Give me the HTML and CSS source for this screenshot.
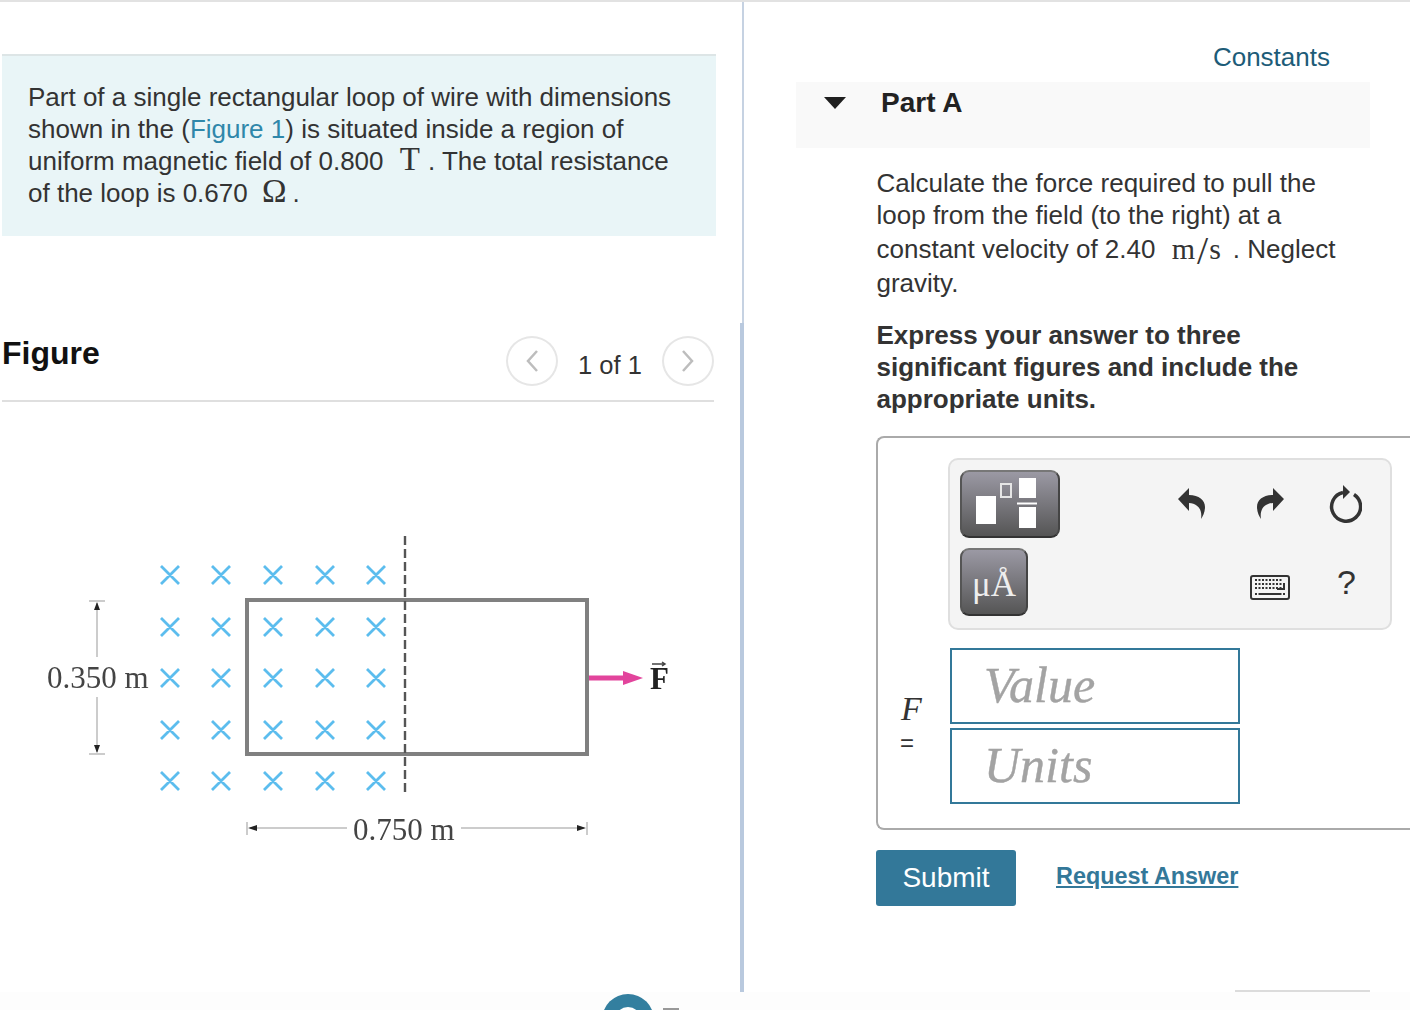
FILE: index.html
```html
<!DOCTYPE html>
<html lang="en">
<head>
<meta charset="utf-8">
<title>Part A</title>
<link rel="stylesheet" href="styles.css">
</head>
<body>
<div class="page">
  <div class="columns">
    <section class="left">
      <div class="intro">
        <p>Part of a single rectangular loop of wire with dimensions<br>shown in the (<a class="fig-link" href="#">Figure 1</a>) is situated inside a region of<br>uniform magnetic field of 0.800 <span class="math math-t">T</span>. The total resistance<br>of the loop is 0.670 <span class="math math-t math-omega">Ω</span>.</p>
      </div>
      <div class="fig-head">
        <h2>Figure</h2>
        <div class="pager">
          <span class="pager-btn"><svg width="14" height="24" viewBox="0 0 14 24"><path d="M12 2 3 12l9 10" class="chev"/></svg></span>
          <span class="pager-text">1 of 1</span>
          <span class="pager-btn"><svg width="14" height="24" viewBox="0 0 14 24"><path d="M2 2l9 10-9 10" class="chev"/></svg></span>
        </div>
      </div>
      <svg class="diagram" width="740" height="590" viewBox="0 402 740 590">
        <g class="xs">
          <path d="M161 566l18 18M179 566l-18 18M212 566l18 18M230 566l-18 18M264 566l18 18M282 566l-18 18M316 566l18 18M334 566l-18 18M367 566l18 18M385 566l-18 18"/>
          <path d="M161 618l18 18M179 618l-18 18M212 618l18 18M230 618l-18 18M264 618l18 18M282 618l-18 18M316 618l18 18M334 618l-18 18M367 618l18 18M385 618l-18 18"/>
          <path d="M161 669l18 18M179 669l-18 18M212 669l18 18M230 669l-18 18M264 669l18 18M282 669l-18 18M316 669l18 18M334 669l-18 18M367 669l18 18M385 669l-18 18"/>
          <path d="M161 721l18 18M179 721l-18 18M212 721l18 18M230 721l-18 18M264 721l18 18M282 721l-18 18M316 721l18 18M334 721l-18 18M367 721l18 18M385 721l-18 18"/>
          <path d="M161 772l18 18M179 772l-18 18M212 772l18 18M230 772l-18 18M264 772l18 18M282 772l-18 18M316 772l18 18M334 772l-18 18M367 772l18 18M385 772l-18 18"/>
        </g>
        <rect class="loop" x="247" y="600" width="340" height="154"/>
        <path class="dash" d="M405 536V795"/>
        <path class="arrow-shaft" d="M589 678H628"/>
        <path class="arrow-head" d="M623 671l20 7-20 7z"/>
        <path class="dim" d="M97 603V657M97 697V752M89 601h16M89 754h16M247 822v13M587 822v13M250 828H347M461 828H584"/>
        <path class="dim-head" d="M97 602l-3 8h6zM97 753l-3-8h6zM248 828l9-3v6zM586 828l-9-3v6z"/>
        <text class="dim-label" x="47" y="688">0.350 m</text>
        <text class="dim-label" x="353" y="840">0.750 m</text>
        <text class="force" x="650" y="689">F</text>
        <path class="force-bar" d="M652 664H665M662 662l3 2-3 2"/>
      </svg>
    </section>
    <div class="divider"><span class="div-top"></span><span class="div-bottom"></span></div>
    <section class="right">
      <a class="constants" href="#">Constants</a>
      <div class="part-bar">
        <svg class="caret" width="22" height="12" viewBox="0 0 22 12"><path d="M0 0H22L11 12z"/></svg>
        <h3>Part A</h3>
      </div>
      <p class="question">Calculate the force required to pull the<br>loop from the field (to the right) at a<br>constant velocity of 2.40 <span class="math math-ms">m<span class="slash">/</span>s</span>. Neglect<br>gravity.</p>
      <p class="instruction">Express your answer to three<br>significant figures and include the<br>appropriate units.</p>
      <div class="answer">
        <div class="toolbar">
          <div class="tool-row">
            <div class="tpl-btn tpl-wide">
              <svg width="96" height="64" viewBox="0 0 96 64">
                <path class="tw" d="M14 24h20v28H14zM57 6h17v20H57zM57 35h17v21H57z"/>
                <path class="tw" d="M55 30.500h20v2H55z"/>
                <rect class="tout" x="39" y="12" width="10" height="13"/>
              </svg>
            </div>
            <div class="tool-icons">
              <span class="cell"><svg width="29" height="32" viewBox="0 0 29 32"><path class="ic" d="M1 11 12 0v7c10 0 16 5 16 12 0 5-2 9-4 12 1-6 0-15-12-16v8z"/></svg></span>
              <span class="cell"><svg class="nudge-r" width="29" height="32" viewBox="0 0 29 32"><path class="ic" d="M28 11 17 0v7C7 7 1 12 1 19c0 5 2 9 4 12-1-6 0-15 12-16v8z"/></svg></span>
              <span class="cell"><svg class="nudge-l" width="34" height="38" viewBox="0 0 34 38"><path class="ring" d="M26 9.500A14.500 14.500 0 1 1 15 7.500"/><path class="ic" d="M15 0l7 7-7 7z"/></svg></span>
            </div>
          </div>
          <div class="tool-row">
            <div class="tpl-btn tpl-narrow"><span class="units-glyph">μÅ</span></div>
            <div class="tool-icons">
              <span class="cell cell-kb"><svg class="nudge-r" width="40" height="25" viewBox="0 0 40 25">
                <rect class="kb" x="1" y="1" width="38" height="23" rx="2"/>
                <path class="kb-keys" d="M5 5h28M5 9h30M5 13h30M5 19h30" />
                <path class="kb-solid" d="M33 8h2v7H27v-2h6zM10 18h21v2H10z"/>
              </svg></span>
              <span class="cell"><span class="help">?</span></span>
            </div>
          </div>
        </div>
        <div class="eq-row">
          <div class="eq-label"><span class="eq-f">F</span><span class="eq-sign">=</span></div>
          <div class="eq-fields">
            <div class="field">Value</div>
            <div class="field">Units</div>
          </div>
        </div>
      </div>
      <div class="actions">
        <button class="submit" type="button">Submit</button>
        <a class="request" href="#">Request Answer</a>
      </div>
      <div class="end-rule"></div>
    </section>
  </div>
  <footer class="footer">
    <svg class="logo" width="52" height="16" viewBox="0 0 52 16"><circle class="logo-o" cx="26" cy="26" r="26"/><circle class="logo-i" cx="26" cy="26" r="13"/></svg>
    <span class="foot-mark"></span>
  </footer>
</div>
</body>
</html>
```
FILE: styles.css
```css
* { box-sizing: border-box; }
html, body { margin: 0; padding: 0; }
body {
  background: #fff;
  color: #333;
  font-family: "Liberation Sans", Arial, sans-serif;
  font-size: 26px;
  line-height: 32px;
  overflow: hidden;
}
p, h2, h3 { margin: 0; }
a { text-decoration: none; }
.page { width: 1410px; height: 1010px; display: flex; flex-direction: column; border-top: 2px solid #e2e2e2; overflow: hidden; }
.columns { display: flex; height: 990px; }

.left { width: 740px; flex: none; padding-top: 52px; }
.intro { margin-left: 2px; width: 714px; height: 182px; background: #e9f5f7; border-top: 2px solid #dde5e6; padding: 25px 26px 0; white-space: nowrap; }
.fig-link { color: #2f87aa; }
.math { font-family: "Liberation Serif", "DejaVu Serif", serif; }
.math-t { font-size: 33px; line-height: 20px; margin: 0 8px 0 9px; }
.math-omega { margin: 0 6px 0 7px; }
.math-ms { font-size: 30px; line-height: 36px; margin: 0 10px 0 9px; letter-spacing: 2px; vertical-align: -1px; }
.slash { font-size: 40px; line-height: 0; vertical-align: -5px; letter-spacing: 1px; }

.fig-head { margin: 100px 0 0 2px; width: 712px; height: 66px; border-bottom: 2px solid #dfdfdf; display: flex; justify-content: space-between; position: relative; }
.fig-head h2 { font-size: 32px; line-height: 34px; color: #111; font-weight: 700; }
.pager { display: flex; align-items: flex-start; height: 50px; margin-right: 0; }
.pager-btn { width: 52px; height: 50px; border: 2px solid #e6e6e6; border-radius: 50%; display: flex; align-items: center; justify-content: center; }
.pager-text { width: 104px; text-align: center; padding-top: 13px; white-space: nowrap; font-size: 25.500px; }
.chev { fill: none; stroke: #bdbdbd; stroke-width: 2.500; }

.diagram { display: block; filter: blur(0.5px); }
.xs path { fill: none; stroke: #5cbdee; stroke-width: 2.800; }
.loop { fill: none; stroke: #808080; stroke-width: 4; }
.dash { fill: none; stroke: #555; stroke-width: 2.400; stroke-dasharray: 9 4; }
.arrow-shaft { stroke: #e2449c; stroke-width: 5; fill: none; }
.arrow-head { fill: #e2449c; }
.dim { stroke: #bcbcbc; stroke-width: 1.500; fill: none; }
.dim-head { fill: #222; }
.dim-label { font-family: "Liberation Serif", serif; font-size: 31px; fill: #444; }
.force { font-family: "Liberation Serif", serif; font-size: 31px; font-weight: 700; fill: #222; }
.force-bar { stroke: #444; stroke-width: 1.500; fill: none; }

.divider { width: 4px; flex: none; display: flex; flex-direction: column; align-items: flex-end; }
.div-top { width: 2px; height: 321px; background: #c6d2e2; }
.div-bottom { width: 4px; flex: 1; background: #b9c9de; }

.right { width: 666px; flex: none; padding: 39px 0 0 52px; display: flex; flex-direction: column; }
.constants { align-self: flex-end; margin-right: 80px; color: #1d5c78; line-height: 32px; }
.part-bar { width: 574px; height: 66px; margin-top: 9px; background: #f9f9f9; display: flex; align-items: flex-start; }
.caret { margin: 15px 0 0 28px; fill: #1f1f1f; flex: none; }
.part-bar h3 { margin: 5px 0 0 35px; font-size: 28px; line-height: 32px; color: #222; }
.question { margin: 19px 0 0 80.500px; line-height: 32px; white-space: nowrap; }
.instruction { margin: 20px 0 0 80.500px; font-weight: 700; white-space: nowrap; font-size: 26px; }

.answer { margin: 21px 0 0 80px; flex: none; height: 394px; border: 2px solid #aaa; border-right: 0; border-radius: 8px 0 0 8px; padding: 20px 0 0 70px; }
.toolbar { width: 444px; height: 172px; background: #f4f4f4; border: 2px solid #dfdfdf; border-radius: 10px; padding: 10px 6px 0 10px; display: flex; flex-direction: column; gap: 10px; }
.tool-row { display: flex; justify-content: space-between; height: 68px; }
.tpl-btn { height: 68px; border-radius: 9px; background: linear-gradient(#9b99a4, #555); border: 2px solid #333; border-top-color: #777; border-left-color: #555; border-right-color: #444; display: flex; align-items: center; justify-content: center; }
.tpl-wide { width: 100px; }
.tpl-narrow { width: 68px; }
.tw { fill: #fff; }
.tout { fill: none; stroke: #e6e6e6; stroke-width: 2; }
.units-glyph { font-family: "Liberation Serif", serif; font-size: 35px; line-height: 40px; color: #eee; margin-top: 6px; white-space: nowrap; }
.tool-icons { display: flex; }
.cell { width: 77px; height: 68px; display: flex; align-items: center; justify-content: center; }
.cell-kb { padding-top: 10px; }
.nudge-r { margin-left: 3px; }
.nudge-l { margin-right: 2px; }
.ic { fill: #333; }
.ring { fill: none; stroke: #333; stroke-width: 3.500; }
.kb { fill: none; stroke: #333; stroke-width: 2; }
.kb-keys { fill: none; stroke: #333; stroke-width: 2; stroke-dasharray: 2 1.500; }
.kb-solid { fill: #333; }
.help { font-size: 34px; line-height: 36px; color: #333; margin-left: 2px; }

.eq-row { display: flex; margin-top: 18px; margin-left: -48px; }
.eq-label { width: 50px; flex: none; display: flex; flex-direction: column; justify-content: center; align-items: flex-start; }
.eq-f { font-family: "Liberation Serif", serif; font-style: italic; font-size: 34px; line-height: 34px; margin-left: 1px; }
.eq-sign { font-family: "Liberation Sans", sans-serif; font-size: 24px; line-height: 34px; }
.eq-fields { display: flex; flex-direction: column; gap: 4px; }
.field { width: 290px; height: 76px; border: 2px solid #337899; padding-left: 32px; font-family: "Liberation Serif", serif; font-style: italic; font-size: 50px; line-height: 70px; color: #a3a3a3; -webkit-text-stroke: 0.4px #a3a3a3; }

.actions { display: flex; align-items: flex-start; margin: 20px 0 0 80px; }
.submit { width: 140px; height: 56px; background: #337899; color: #fff; border: 0; border-radius: 3px; font-family: "Liberation Sans", sans-serif; font-size: 28px; padding: 0; }
.request { margin: 10px 0 0 40px; font-weight: 700; font-size: 23.400px; line-height: 32px; color: #337899; text-decoration: underline; white-space: nowrap; }
.end-rule { width: 135px; height: 2px; background: #dcdcdc; margin-top: auto; align-self: flex-end; margin-right: 40px; }

.footer { height: 18px; background: #fdfdfd; display: flex; padding: 2px 0 0 602px; gap: 9px; overflow: hidden; }
.logo { flex: none; }
.logo-o { fill: #337f9f; }
.logo-i { fill: #fff; }
.foot-mark { width: 16px; height: 2px; background: #999; align-self: flex-end; }
```
